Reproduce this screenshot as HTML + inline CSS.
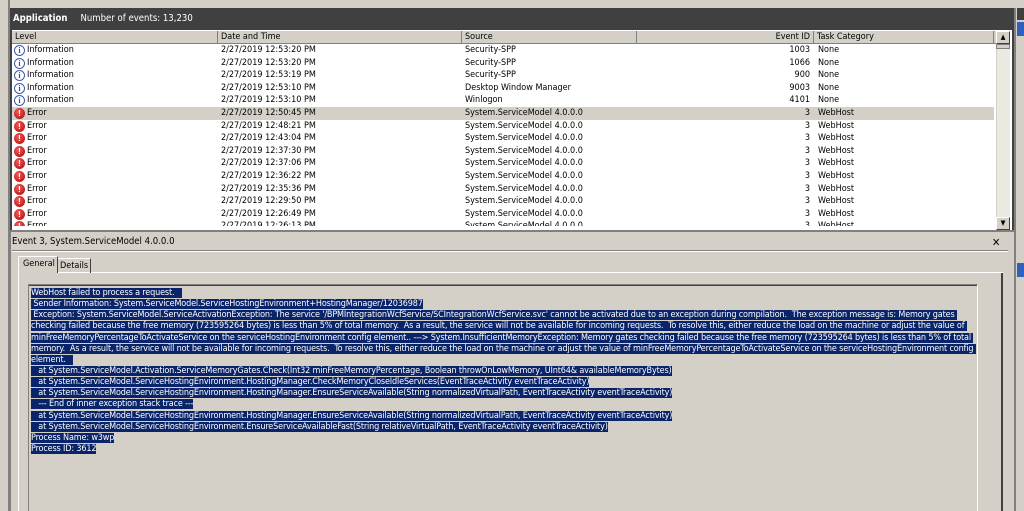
<!DOCTYPE html>
<html style="overflow:hidden;height:511px"><head><meta charset="utf-8"><style>
*{margin:0;padding:0;box-sizing:border-box}
body{width:1024px;height:511px;overflow:hidden;background:#d4d0c8;font-family:"DejaVu Sans Condensed","Liberation Sans",sans-serif;font-size:9px;color:#000;position:relative}
.abs{position:absolute}
.row{position:absolute;left:12px;width:982px;height:12.6px;line-height:12.6px;white-space:nowrap}
.row span{position:absolute}
.ic{position:absolute;left:2px;top:1px;width:11px;height:11px;border-radius:50%}
.info{border:1px solid #3a5ca8;background:#fff;color:#2b4fb0;font:bold 8px "Liberation Serif",serif;text-align:center;line-height:9px}
.err{background:radial-gradient(circle at 40% 35%,#f06060,#b00000);color:#fff;font:bold 8px "Liberation Sans",sans-serif;text-align:center;line-height:11px}
.hdr span{position:absolute;top:0;height:12px;border-right:1px solid #808080;padding-left:3px;line-height:12px}
.txt{position:absolute;left:31px;top:288px;line-height:11.15px;font-size:9px;letter-spacing:-0.15px}
.txt div{height:11.15px;white-space:nowrap}
.txt div span{background:#0a246a;color:#fff;white-space:pre}
</style></head><body>
<div class="abs" style="left:8px;top:0;width:2px;height:511px;background:#808080"></div>
<div class="abs" style="left:10px;top:8px;width:1004px;height:222px;background:#404040"></div>
<div class="abs" style="left:13px;top:10px;color:#fff;font-weight:bold;font-size:9.5px;line-height:18px">Application <span style="font-weight:normal;margin-left:10px">Number of events: 13,230</span></div>
<div class="abs" style="left:12px;top:30px;width:1000px;height:200px;background:#fff"></div>
<div class="abs hdr" style="left:12px;top:31px;width:984px;height:13px;background:#d4d0c8;border-bottom:1px solid #808080">
<span style="left:0;width:206px">Level</span><span style="left:206px;width:244px">Date and Time</span><span style="left:450px;width:175px">Source</span><span style="left:625px;width:177px;text-align:right;padding-right:3px">Event ID</span><span style="left:802px;width:180px">Task Category</span></div>
<div class="abs" style="left:996px;top:31px;width:14px;height:199px;background:#ece9e1;border-left:1px solid #d4d0c8"></div>
<div class="abs" style="left:996px;top:31px;width:14px;height:13px;background:#d4d0c8;border:1px solid #fff;border-right-color:#404040;border-bottom-color:#404040;font-size:7px;text-align:center;line-height:11px">▲</div>
<div class="abs" style="left:996px;top:44px;width:14px;height:5px;background:#d4d0c8;border:1px solid #808080"></div>
<div class="abs" style="left:996px;top:217px;width:14px;height:13px;background:#d4d0c8;border:1px solid #fff;border-right-color:#404040;border-bottom-color:#404040;font-size:7px;text-align:center;line-height:11px">▼</div>
<div id="rows"></div>
<div class="abs" style="left:10px;top:230px;width:1004px;height:2px;background:#808080"></div>
<div class="abs" style="left:12px;top:236px;line-height:12px;font-size:9.5px">Event 3, System.ServiceModel 4.0.0.0</div>
<div class="abs" style="left:992px;top:236px;font-weight:bold;font-size:11px">✕</div>
<div class="abs" style="left:12px;top:250px;width:996px;height:1px;background:#808080"></div>
<div class="abs" style="left:12px;top:251px;width:996px;height:1px;background:#fff"></div>
<div class="abs" style="left:10px;top:232px;width:1px;height:279px;background:#808080"></div>
<div class="abs" style="left:1001px;top:272px;width:2px;height:239px;background:#404040"></div>
<div class="abs" style="left:18px;top:272px;width:985px;height:1px;background:#fff"></div>
<div class="abs" style="left:18px;top:272px;width:1px;height:239px;background:#fff"></div>
<div class="abs" style="left:18px;top:256px;width:40px;height:17px;background:#d4d0c8;border:1px solid #fff;border-bottom:none;border-right-color:#404040;line-height:14px;padding-left:4px">General</div>
<div class="abs" style="left:58px;top:258px;width:33px;height:15px;border-top:1px solid #fff;border-right:1px solid #404040;line-height:14px;padding-left:2px">Details</div>
<div class="abs" style="left:28px;top:284px;width:950px;height:227px;border-top:1px solid #808080;border-left:1px solid #808080;border-right:1px solid #fff"></div>
<div class="abs" style="left:29px;top:285px;width:948px;height:1px;background:#404040"></div>
<div class="txt"><div><span>WebHost failed to process a request.   </span></div><div><span> Sender Information: System.ServiceModel.ServiceHostingEnvironment+HostingManager/12036987</span></div><div><span> Exception: System.ServiceModel.ServiceActivationException: The service '/BPMIntegrationWcfService/SCIntegrationWcfService.svc' cannot be activated due to an exception during compilation.  The exception message is: Memory gates </span></div><div><span>checking failed because the free memory (723595264 bytes) is less than 5% of total memory.  As a result, the service will not be available for incoming requests.  To resolve this, either reduce the load on the machine or adjust the value of </span></div><div><span>minFreeMemoryPercentageToActivateService on the serviceHostingEnvironment config element.. ---&gt; System.InsufficientMemoryException: Memory gates checking failed because the free memory (723595264 bytes) is less than 5% of total </span></div><div><span>memory.  As a result, the service will not be available for incoming requests.  To resolve this, either reduce the load on the machine or adjust the value of minFreeMemoryPercentageToActivateService on the serviceHostingEnvironment config </span></div><div><span>element.   </span></div><div><span>   at System.ServiceModel.Activation.ServiceMemoryGates.Check(Int32 minFreeMemoryPercentage, Boolean throwOnLowMemory, UInt64&amp; availableMemoryBytes)</span></div><div><span>   at System.ServiceModel.ServiceHostingEnvironment.HostingManager.CheckMemoryCloseIdleServices(EventTraceActivity eventTraceActivity)</span></div><div><span>   at System.ServiceModel.ServiceHostingEnvironment.HostingManager.EnsureServiceAvailable(String normalizedVirtualPath, EventTraceActivity eventTraceActivity)</span></div><div><span>   --- End of inner exception stack trace ---</span></div><div><span>   at System.ServiceModel.ServiceHostingEnvironment.HostingManager.EnsureServiceAvailable(String normalizedVirtualPath, EventTraceActivity eventTraceActivity)</span></div><div><span>   at System.ServiceModel.ServiceHostingEnvironment.EnsureServiceAvailableFast(String relativeVirtualPath, EventTraceActivity eventTraceActivity)</span></div><div><span>Process Name: w3wp</span></div><div><span>Process ID: 3612</span></div></div>
<div class="abs" style="left:1014px;top:8px;width:2px;height:503px;background:#808080"></div>
<div class="abs" style="left:1017px;top:8px;width:7px;height:12px;background:#404040"></div>
<div class="abs" style="left:1017px;top:22px;width:7px;height:14px;background:#3060c0"></div>
<div class="abs" style="left:1017px;top:263px;width:7px;height:14px;background:#3060c0"></div>
<script>
var d=[["i","2/27/2019 12:53:20 PM","Security-SPP","1003","None"],["i","2/27/2019 12:53:20 PM","Security-SPP","1066","None"],["i","2/27/2019 12:53:19 PM","Security-SPP","900","None"],["i","2/27/2019 12:53:10 PM","Desktop Window Manager","9003","None"],["i","2/27/2019 12:53:10 PM","Winlogon","4101","None"],
["e","2/27/2019 12:50:45 PM"],["e","2/27/2019 12:48:21 PM"],["e","2/27/2019 12:43:04 PM"],["e","2/27/2019 12:37:30 PM"],["e","2/27/2019 12:37:06 PM"],["e","2/27/2019 12:36:22 PM"],["e","2/27/2019 12:35:36 PM"],["e","2/27/2019 12:29:50 PM"],["e","2/27/2019 12:26:49 PM"],["e","2/27/2019 12:26:13 PM"]];
var h="";d.forEach(function(r,k){var e=r[0]=="e";var top=44+k*12.6;var hi=k==5?"background:#d4d0c8;":"";
if(k==14)h+='<div class="row" style="top:'+top+'px;height:6px;overflow:hidden">';else h+='<div class="row" style="top:'+top+'px;'+hi+'">';
h+='<div class="ic '+(e?'err':'info')+'">'+(e?'!':'i')+'</div><span style="left:15px">'+(e?'Error':'Information')+'</span><span style="left:209px">'+r[1]+'</span><span style="left:453px">'+(e?'System.ServiceModel 4.0.0.0':r[2])+'</span><span style="right:184px">'+(e?'3':r[3])+'</span><span style="left:806px">'+(e?'WebHost':r[4])+'</span></div>';});
document.getElementById("rows").innerHTML=h;
</script>
</body></html>
